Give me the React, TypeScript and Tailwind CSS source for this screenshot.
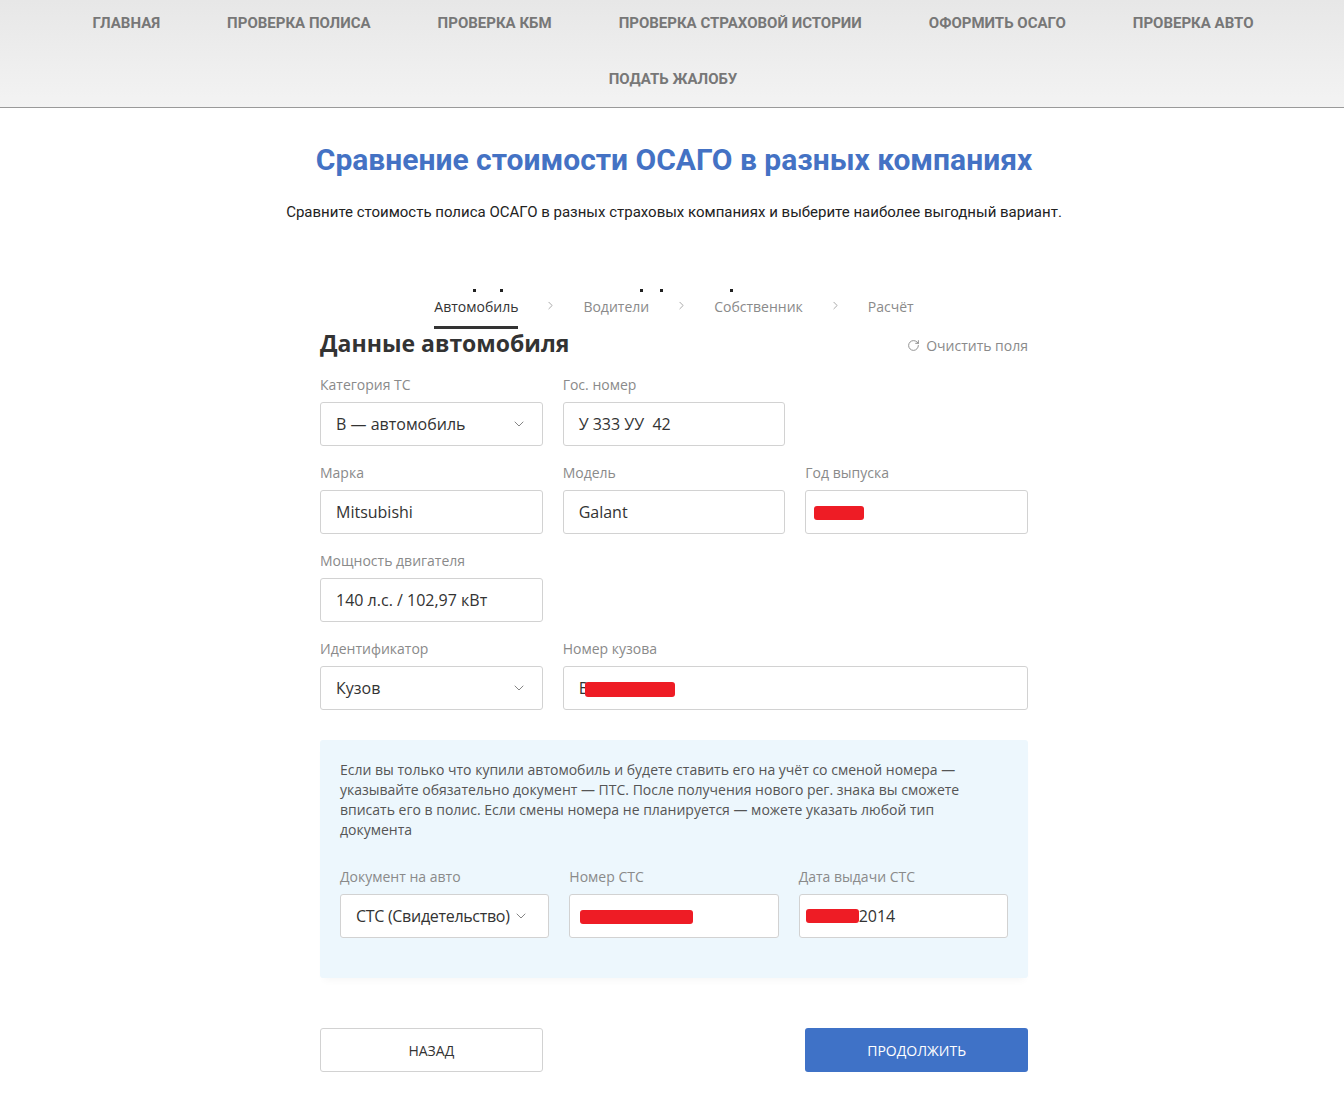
import React from "react";
import { ChevronDown, ChevronRight, RotateCw } from "lucide-react";

const navRow1 = [
  "ГЛАВНАЯ",
  "ПРОВЕРКА ПОЛИСА",
  "ПРОВЕРКА КБМ",
  "ПРОВЕРКА СТРАХОВОЙ ИСТОРИИ",
  "ОФОРМИТЬ ОСАГО",
  "ПРОВЕРКА АВТО",
];

function Label({ children }: { children: React.ReactNode }) {
  return <div className="text-[14px] leading-[20px] text-[#8a8a8a] mb-[7px]">{children}</div>;
}

function Box({ children, className = "" }: { children?: React.ReactNode; className?: string }) {
  return (
    <div
      className={
        "h-[44px] bg-white border border-[#d2d2d2] rounded-[3px] flex items-center px-[15px] text-[16px] text-[#333] whitespace-nowrap overflow-hidden " +
        className
      }
    >
      {children}
    </div>
  );
}

function Select({ value, tight = false }: { value: string; tight?: boolean }) {
  return (
    <Box className={tight ? "justify-start" : "justify-between"}>
      <span className={tight ? "tracking-[-0.3px]" : ""}>{value}</span>
      <ChevronDown
        size={16}
        strokeWidth={1.2}
        className={"shrink-0 text-[#666] " + (tight ? "ml-[3px]" : "mr-[0px]")}
      />
    </Box>
  );
}

function Red({ className }: { className: string }) {
  return <span className={"inline-block bg-[#ee1c25] rounded-[3px] " + className} />;
}

export default function App() {
  return (
    <div className="min-h-[1102px] bg-white" style={{ fontFamily: "'Open Sans', sans-serif" }}>
      <nav
        className="bg-gradient-to-b from-[#e7e7e7] to-[#f3f3f3] border-b border-[#9a9a9a] pb-[5px] pl-[2px]"
        style={{ fontFamily: "Roboto, sans-serif" }}
      >
        <div className="flex flex-wrap justify-center gap-x-[67px] gap-y-[10px]">
          {navRow1.map((t) => (
            <span key={t} className="h-[46px] leading-[46px] text-[15px] font-bold text-[#777]">
              {t}
            </span>
          ))}
          <div className="w-full flex justify-center">
            <span className="h-[46px] leading-[46px] text-[15px] font-bold text-[#777]">ПОДАТЬ ЖАЛОБУ</span>
          </div>
        </div>
      </nav>

      <main className="pl-[4px]">
        <h1
          className="mt-[34px] text-center text-[30px] leading-[36px] font-bold text-[#4472c4]"
          style={{ fontFamily: "Roboto, sans-serif" }}
        >
          Сравнение стоимости ОСАГО в разных компаниях
        </h1>
        <p
          className="mt-[24px] text-center text-[15px] leading-[20px] text-[#222]"
          style={{ fontFamily: "Roboto, sans-serif" }}
        >
          Сравните стоимость полиса ОСАГО в разных страховых компаниях и выберите наиболее выгодный вариант.
        </p>

        <div className="w-[708px] mx-auto">
          <div className="relative h-[75px]">
            <span className="absolute left-[153px] top-[67px] w-[3px] h-[3px] bg-[#222]" />
            <span className="absolute left-[180px] top-[67px] w-[3px] h-[3px] bg-[#222]" />
            <span className="absolute left-[320px] top-[67px] w-[3px] h-[3px] bg-[#222]" />
            <span className="absolute left-[340px] top-[67px] w-[3px] h-[3px] bg-[#222]" />
            <span className="absolute left-[410px] top-[67px] w-[3px] h-[3px] bg-[#222]" />
          </div>

          <div className="flex items-start justify-center text-[14px] leading-[20px] text-[#8a8a8a]">
            <span className="text-[#333] pb-[9px] border-b-[3px] border-[#333]">Автомобиль</span>
            <ChevronRight size={13} strokeWidth={1.3} className="mx-[26px] mt-[2px] text-[#888]" />
            <span>Водители</span>
            <ChevronRight size={13} strokeWidth={1.3} className="mx-[26px] mt-[2px] text-[#888]" />
            <span>Собственник</span>
            <ChevronRight size={13} strokeWidth={1.3} className="mx-[26px] mt-[2px] text-[#888]" />
            <span>Расчёт</span>
          </div>

          <div className="flex items-center justify-between">
            <h2 className="text-[23px] leading-[28px] font-bold text-[#333]">Данные автомобиля</h2>
            <div className="flex items-center gap-[6px] text-[14px] text-[#8a8a8a] mt-[4px]">
              <RotateCw size={13} strokeWidth={1.7} />
              <span>Очистить поля</span>
            </div>
          </div>

          <div className="mt-[18px] grid grid-cols-3 gap-x-[20px] gap-y-[17px]">
            <div>
              <Label>Категория ТС</Label>
              <Select value="B — автомобиль" />
            </div>
            <div>
              <Label>Гос. номер</Label>
              <Box>У 333 УУ&nbsp;&nbsp;42</Box>
            </div>
            <div />

            <div>
              <Label>Марка</Label>
              <Box>Mitsubishi</Box>
            </div>
            <div>
              <Label>Модель</Label>
              <Box>Galant</Box>
            </div>
            <div>
              <Label>Год выпуска</Label>
              <Box className="pl-[8px]">
                <Red className="w-[50px] h-[14px] mt-[1px]" />
              </Box>
            </div>

            <div>
              <Label>Мощность двигателя</Label>
              <Box>140 л.с. / 102,97 кВт</Box>
            </div>
            <div />
            <div />

            <div>
              <Label>Идентификатор</Label>
              <Select value="Кузов" />
            </div>
            <div className="col-span-2">
              <Label>Номер кузова</Label>
              <Box>
                <span>В</span>
                <Red className="-ml-[4px] w-[90px] h-[15px] mt-[2px]" />
              </Box>
            </div>
          </div>

          <div className="mt-[30px] bg-[#edf7fd] rounded-[3px] px-[20px] pt-[20px] pb-[40px] shadow-[0_6px_8px_-4px_rgba(0,0,0,0.04)]">
            <p className="text-[14px] leading-[20px] text-[#555] pr-[40px]">
              Если вы только что купили автомобиль и будете ставить его на учёт со сменой номера — указывайте обязательно
              документ — ПТС. После получения нового рег. знака вы сможете вписать его в полис. Если смены номера не
              планируется — можете указать любой тип документа
            </p>
            <div className="mt-[27px] grid grid-cols-3 gap-x-[20px]">
              <div>
                <Label>Документ на авто</Label>
                <Select value="СТС (Свидетельство)" tight />
              </div>
              <div>
                <Label>Номер СТС</Label>
                <Box className="pl-[10px]">
                  <Red className="w-[113px] h-[14px] mt-[2px]" />
                </Box>
              </div>
              <div>
                <Label>Дата выдачи СТС</Label>
                <Box className="pl-[6px]">
                  <Red className="w-[53px] h-[14px]" />
                  <span>2014</span>
                </Box>
              </div>
            </div>
          </div>

          <div className="mt-[50px] grid grid-cols-3 gap-x-[20px] pb-[30px]">
            <button className="h-[44px] bg-white border border-[#d2d2d2] rounded-[3px] text-[14px] text-[#333]">
              НАЗАД
            </button>
            <div />
            <button className="h-[44px] bg-[#3f72c7] rounded-[3px] text-[14px] text-white">ПРОДОЛЖИТЬ</button>
          </div>
        </div>
      </main>
    </div>
  );
}
